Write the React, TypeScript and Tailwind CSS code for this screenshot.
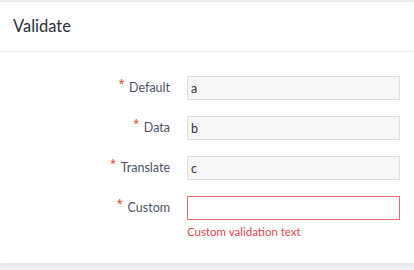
import React from "react";

type Field = {
	label: string;
	value: string;
	error?: string;
};

const fields: Field[] = [
	{ label: "Default", value: "a" },
	{ label: "Data", value: "b" },
	{ label: "Translate", value: "c" },
	{ label: "Custom", value: "", error: "Custom validation text" },
];

const App: React.FC = () => {
	return (
		<div
			className="w-[414px] h-[270px] bg-[#eef0f4] pt-[2px] overflow-hidden"
			style={{ fontFamily: 'Lato, "Liberation Sans", Arial, sans-serif' }}
		>
			<div className="bg-white h-[261px] shadow-[0_1px_3px_rgba(0,0,0,0.08)]">
				<div className="h-[50px] flex items-center px-[13px] border-b border-[#e8eaec] text-[16.5px] text-[#2a2e3a]">
					Validate
				</div>
				<div className="flex flex-col gap-4 pt-[24px] pr-[14px]">
					{fields.map((f) => (
						<div key={f.label} className="flex items-start">
							<label className="w-[170px] h-[24px] flex items-center justify-end text-[12.5px] text-[#4b5260]">
								<span className="font-['Liberation_Sans'] text-[#ed4014] text-[14px] leading-none mr-[5px] -mt-[9px]">
									*
								</span>
								{f.label}
							</label>
							<div className="ml-[17px] flex-1 flex flex-col">
								<input
									readOnly
									value={f.value}
									className={
										f.error
											? "h-[24px] w-full border border-[#e46a70] bg-white px-[3px] text-[12.5px] text-[#4b5260] outline-none"
											: "h-[24px] w-full border border-[#dcdee2] bg-[#f7f7f7] px-[3px] text-[12.5px] text-[#333] outline-none"
									}
								/>
								{f.error && (
									<p className="mt-[4px] text-[11.5px] leading-[16px] text-[#e0474f]">
										{f.error}
									</p>
								)}
							</div>
						</div>
					))}
				</div>
			</div>
		</div>
	);
};

export default App;
